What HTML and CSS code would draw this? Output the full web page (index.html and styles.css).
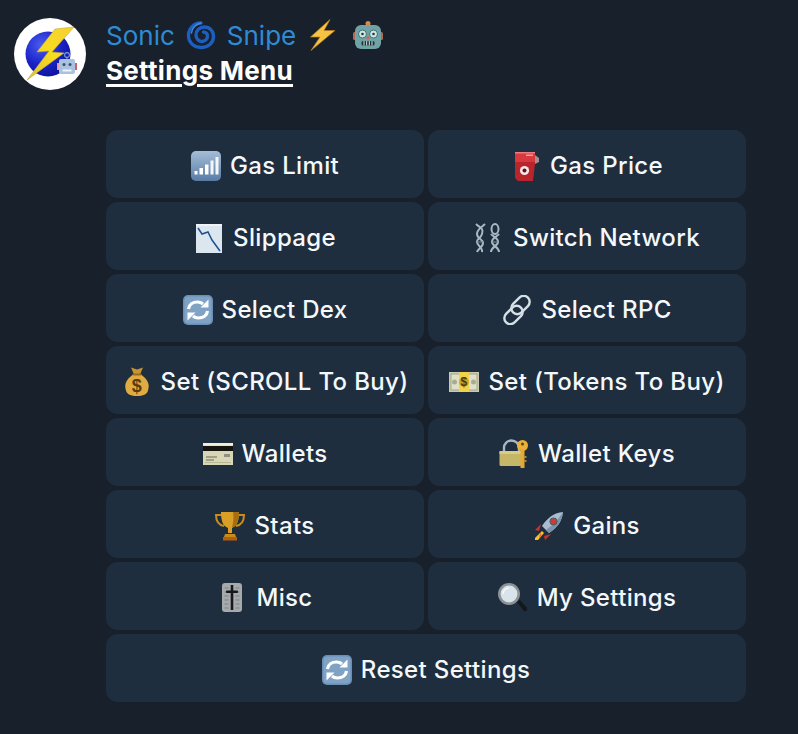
FILE: index.html
```html
<!DOCTYPE html>
<html lang="en">
<head>
<meta charset="utf-8">
<title>Settings Menu</title>
<link rel="stylesheet" href="styles.css">
</head>
<body>
<main class="chat">
  <header class="message">
    <svg class="avatar" viewBox="0 0 72 72">
      <defs>
        <radialGradient id="sphere" cx="0.35" cy="0.3" r="0.8"><stop offset="0" stop-color="#4a5cf0"/><stop offset="0.55" stop-color="#1a22c8"/><stop offset="1" stop-color="#0c1190"/></radialGradient>
        <linearGradient id="bolt" x1="0" y1="1" x2="1" y2="0"><stop offset="0" stop-color="#d8c040"/><stop offset="0.5" stop-color="#f8dc20"/><stop offset="1" stop-color="#f5d030"/></linearGradient>
      </defs>
      <circle cx="36" cy="36" r="36" fill="#fff"/>
      <circle cx="34" cy="36" r="22.500" fill="url(#sphere)"/>
      <path d="M60 9 L41 11 L23 34 L35 33 L13 62 L50 35 L38 34 Z" fill="url(#bolt)" stroke="#c4ab30" stroke-width="0.600"/>
      <g>
        <circle cx="53" cy="37" r="2.400" fill="none" stroke="#7f9fd0" stroke-width="1.100"/>
        <path d="M53 39.500v2" stroke="#7f9fd0" stroke-width="1.100"/>
        <rect x="45" y="41" width="16" height="15" rx="2" fill="#a9c2e0"/>
        <rect x="43" y="45" width="2" height="7" fill="#e0a0a8"/><rect x="61" y="45" width="2" height="7" fill="#c9606a"/>
        <circle cx="50" cy="46.500" r="1.500" fill="#3c4f70"/><circle cx="56" cy="46.500" r="1.500" fill="#3c4f70"/>
        <rect x="48.500" y="51.500" width="9" height="2" fill="#eef3f8"/>
      </g>
    </svg>
    <div class="message-text">
      <p class="bot-name">
        <span>Sonic</span>
        <svg class="title-icon" viewBox="0 0 30 30"><path d="M15 3C8 3 2.500 8.500 2.500 15.500 2.500 22.500 8 27.500 15 27.500 22 27.500 27.500 23 27.500 16.500 27.500 11 23.500 7 18.500 7 13.500 7 10 10.500 10 15 10 19 13 21.500 16 21.500 19 21.500 21.500 19 21.500 16 21.500 13.500 19.500 12 17.500 12" fill="none" stroke="#1d5fc0" stroke-width="3.400" stroke-linecap="round"/><path d="M15 3C10 4 6 8 5.500 13" fill="none" stroke="#3f8ae0" stroke-width="1.500" stroke-linecap="round"/></svg>
        <span>Snipe</span>
        <svg class="title-icon title-zap" viewBox="0 0 30 32"><path d="M21 0.500 L1.500 18 L11 18 L2 31.500 L26 11.500 L15 11.500 Z" fill="#f6c343" stroke="#b97f1c" stroke-width="0.700"/></svg>
        <svg class="title-icon" viewBox="0 0 30 30"><circle cx="15" cy="3.500" r="2.500" fill="#d98a4a"/><rect x="0" y="12" width="4" height="8" rx="1.500" fill="#b06a52"/><rect x="26" y="12" width="4" height="8" rx="1.500" fill="#b06a52"/><rect x="2" y="5" width="26" height="24" rx="6" fill="#6fa3a5"/><circle cx="9.500" cy="14" r="4" fill="#cfe6e6" stroke="#3f6f73" stroke-width="1"/><circle cx="20.500" cy="14" r="4" fill="#cfe6e6" stroke="#3f6f73" stroke-width="1"/><circle cx="9.500" cy="14" r="1.300" fill="#22383c"/><circle cx="20.500" cy="14" r="1.300" fill="#22383c"/><path d="M15 15.500l-2 3.500h4z" fill="#c9655c"/><rect x="8.500" y="21" width="13" height="4.500" rx="1.500" fill="#1f3236"/><path d="M11 21v4.500M13.700 21v4.500M16.300 21v4.500M19 21v4.500" stroke="#cfe6e6" stroke-width="1"/></svg>
      </p>
      <h1 class="menu-title">Settings Menu</h1>
    </div>
  </header>

  <nav class="keyboard">
    <button class="key">
      <svg class="icon" viewBox="0 0 30 30"><defs><linearGradient id="tile" x1="0" y1="0" x2="0" y2="1"><stop offset="0" stop-color="#a5bdd6"/><stop offset="1" stop-color="#587ca6"/></linearGradient></defs><rect width="30" height="30" rx="5" fill="url(#tile)"/><rect x="3.500" y="20" width="3" height="3.500" fill="#fff"/><rect x="8.500" y="17" width="3.500" height="6.500" fill="#fff"/><rect x="14" y="13.500" width="3.500" height="10" fill="#fff"/><rect x="19.500" y="9.500" width="3" height="14" fill="#f4f7fa"/><rect x="24.500" y="6" width="3" height="17.500" fill="#f4f7fa"/></svg>
      <span>Gas Limit</span>
    </button>
    <button class="key">
      <svg class="icon" viewBox="0 0 30 30"><path d="M4 1h20v5l1 2-1 2v3l-2 17H7L4 27z" fill="#b8252b"/><path d="M4 1h20v10H4z" fill="#d8393f"/><path d="M4 1h20v1.500H4z" fill="#ee7b7e"/><path d="M24 4l4 3v4l-4 2z" fill="#a48e8e"/><rect x="15" y="3.500" width="7" height="1.500" fill="#f0a0a0"/><circle cx="13.500" cy="19.500" r="4.600" fill="#f6e6e6"/><circle cx="13.500" cy="19.500" r="2" fill="#5a1518"/></svg>
      <span>Gas Price</span>
    </button>
    <button class="key">
      <svg class="icon" viewBox="0 0 30 30"><rect x="2" y="1" width="26" height="29" fill="#dbe6ee"/><path d="M2 1h26v2H2z" fill="#eef3f7"/><path d="M4 5L8 11 14 9 18 17 26 28" fill="none" stroke="#1f4f95" stroke-width="1.500"/></svg>
      <span>Slippage</span>
    </button>
    <button class="key">
      <svg class="icon" viewBox="0 0 30 30"><g fill="none" stroke="#a9b8c2" stroke-width="2"><path d="M2 1c4 4 8 4 6 10S3 15 3 19s6 5 5 10M11 1C7 5 3 6 3 11s6 5 6 9-5 6-6 9"/><ellipse cx="21" cy="6" rx="3.500" ry="5"/><path d="M25 11c-2 3-7 3-7 8 0 4 7 5 7 10M17 11c2 3 7 3 7 8 0 4-7 5-7 10"/></g><g fill="none" stroke="#7f8e98" stroke-width="1"><path d="M3 19h6M18 19h6"/></g></svg>
      <span>Switch Network</span>
    </button>
    <button class="key">
      <svg class="icon" viewBox="0 0 30 30"><use href="#reset"/></svg>
      <span>Select Dex</span>
    </button>
    <button class="key">
      <svg class="icon" viewBox="0 0 30 30"><g fill="none" stroke="#d5dfe6" stroke-width="2.400"><rect x="8" y="4" width="21" height="12" rx="6" transform="rotate(-45 18.500 10)"/><rect x="1" y="14" width="21" height="12" rx="6" transform="rotate(-45 11.500 20)"/></g></svg>
      <span>Select RPC</span>
    </button>
    <button class="key">
      <svg class="icon" viewBox="0 0 30 30"><path d="M9 0.500l6 2 6-2-3 7h-6z" fill="#c9942f"/><path d="M11 7.500h8c7 5 9 10 7 16-1 4-5 5.500-11 5.500S5 27.500 4 23.500c-2-6 0-11 7-16z" fill="#e0ac42"/><rect x="10.500" y="6.500" width="9" height="2" rx="1" fill="#9a6a1c"/><text x="15" y="25" text-anchor="middle" class="glyph-money">$</text></svg>
      <span>Set (SCROLL To Buy)</span>
    </button>
    <button class="key">
      <svg class="icon" viewBox="0 0 30 30"><rect y="5" width="30" height="20" fill="#c9cbb0"/><rect x="2" y="7" width="26" height="16" fill="#e0e0c8" stroke="#9a9c82" stroke-width="0.800"/><rect x="10" y="5" width="10" height="20" fill="#f2d24a"/><circle cx="15" cy="15" r="5" fill="#d0a52a"/><text x="15" y="19" text-anchor="middle" class="glyph-bill">$</text><circle cx="5.500" cy="15" r="2.500" fill="#a9ab90"/><circle cx="24.500" cy="15" r="2.500" fill="#a9ab90"/></svg>
      <span>Set (Tokens To Buy)</span>
    </button>
    <button class="key">
      <svg class="icon" viewBox="0 0 30 30"><rect y="4" width="30" height="22" fill="#d8d6b4"/><rect y="4" width="30" height="2.500" fill="#f2efd8"/><rect y="7" width="30" height="5" fill="#15140f"/><path d="M3 18h11M3 21h8" stroke="#8d8d78" stroke-width="1.300"/><rect x="21" y="15" width="6" height="3" fill="#8f8f86"/><rect x="2" y="23" width="26" height="1" fill="#b9b795"/></svg>
      <span>Wallets</span>
    </button>
    <button class="key">
      <svg class="icon" viewBox="0 0 30 30"><path d="M5 13V9a7.500 7.500 0 0 1 15 0v4" fill="none" stroke="#a8b6c4" stroke-width="2.400"/><rect x="0.500" y="12" width="22" height="15" rx="1.500" fill="#c6b668"/><rect x="0.500" y="12" width="22" height="3" fill="#d9cc86"/><circle cx="23.500" cy="6.500" r="5.500" fill="#eab03a"/><circle cx="23.500" cy="5" r="1.500" fill="#5d4314"/><rect x="21.500" y="10" width="4" height="19" fill="#e5a830"/><path d="M25.500 18h2M25.500 22h2" stroke="#e5a830" stroke-width="1.500"/></svg>
      <span>Wallet Keys</span>
    </button>
    <button class="key">
      <svg class="icon" viewBox="0 0 30 30"><path d="M7 4H1c0 6 3 10 8 11M23 4h6c0 6-3 10-8 11" fill="none" stroke="#c78d18" stroke-width="2"/><path d="M6 1h18c0 9-2 14-7 16v5h-4v-5C8 15 6 10 6 1z" fill="#d9a025"/><path d="M18 1h6c0 9-2 14-7 16 1-5 2-10 1-16z" fill="#a86f10"/><path d="M10 23h10l1 3H9z" fill="#c78d18"/><rect x="8" y="26" width="14" height="3.500" fill="#b35f12"/></svg>
      <span>Stats</span>
    </button>
    <button class="key">
      <svg class="icon" viewBox="0 0 30 30"><path d="M7 13l-6 6 4 1zM17 23l-6 6-1-4z" fill="#c9342a"/><path d="M29 1C20 2 14 6 8 15l7 7c9-6 13-12 14-21z" fill="#a9bdd0"/><path d="M29 1c-1 9-5 15-14 21l-3-3C19 14 25 8 29 1z" fill="#7c93ab"/><circle cx="19.500" cy="10.500" r="3.600" fill="#cf3b2e" stroke="#4d5a68" stroke-width="1"/><path d="M8 20l2 2-6 7-3 0 0-2z" fill="#f2c230"/><path d="M6 22l2 2-3 3z" fill="#e9702b"/></svg>
      <span>Gains</span>
    </button>
    <button class="key">
      <svg class="icon" viewBox="0 0 30 30"><rect x="5" width="20" height="29" rx="3" fill="#a6aaad"/><path d="M7.500 5h4M7.500 9h4M7.500 13h4M7.500 17h4M7.500 21h4M7.500 25h4M18.500 5h4M18.500 9h4M18.500 13h4M18.500 17h4M18.500 21h4M18.500 25h4" stroke="#7d8184" stroke-width="1"/><rect x="13.700" y="2" width="2.600" height="25" fill="#17181a"/><rect x="9" y="7.500" width="12" height="2.600" rx="0.800" fill="#17181a"/></svg>
      <span>Misc</span>
    </button>
    <button class="key">
      <svg class="icon" viewBox="0 0 30 30"><path d="M19 19l3-2 7 8c1 2-1 4-3 3z" fill="#14171b"/><circle cx="11" cy="11" r="11" fill="#8d9296"/><circle cx="11" cy="11" r="8.400" fill="#d9e4ea"/><path d="M5 11a6 6 0 0 1 6-6" fill="none" stroke="#f6fafc" stroke-width="1.500"/></svg>
      <span>My Settings</span>
    </button>
    <button class="key key-wide">
      <svg class="icon" viewBox="0 0 30 30">
        <symbol id="reset" viewBox="0 0 30 30">
          <rect width="30" height="30" rx="5" fill="#6a8fb6"/>
          <rect x="1.500" y="1.500" width="27" height="27" rx="4" fill="#7fa2c5"/>
          <path d="M5.500 14C6 9.500 10 7 14.500 7c2 0 4 .6 5.500 2" fill="none" stroke="#fff" stroke-width="3.200"/>
          <path d="M24.500 16c-.5 4.500-4.500 7-9 7-2 0-4-.6-5.500-2" fill="none" stroke="#fff" stroke-width="3.200"/>
          <path d="M17.500 12.500h8v-8zM12.500 17.500h-8v8z" fill="#fff"/>
        </symbol>
        <use href="#reset"/>
      </svg>
      <span>Reset Settings</span>
    </button>
  </nav>
</main>
</body>
</html>
```

FILE: styles.css
```css
* {
  box-sizing: border-box;
}

html,
body {
  margin: 0;
  height: 100%;
}

body {
  background: #18202b;
  color: #f4f8fb;
  font-family: Inter, "Liberation Sans", sans-serif;
  overflow: hidden;
}

.chat {
  padding: 18px 52px 0 14px;
}

.message {
  display: flex;
  gap: 20px;
  align-items: flex-start;
}

.avatar {
  width: 72px;
  height: 72px;
  flex: none;
}

.bot-name {
  margin: 0;
  height: 34px;
  display: flex;
  align-items: center;
  gap: 11px;
  color: #2f8bd4;
  font-size: 26px;
  font-weight: 400;
}

.title-icon {
  width: 30px;
  height: 30px;
  flex: none;
}

.title-zap {
  width: 30px;
  height: 32px;
  margin: 0 3px 0 2px;
}

.menu-title {
  margin: 2px 0 0;
  font-size: 26px;
  line-height: 34px;
  font-weight: 700;
  letter-spacing: 0.3px;
  color: #fff;
  text-decoration: underline;
  text-decoration-thickness: 2.500px;
  text-underline-offset: 4px;
}

.keyboard {
  display: grid;
  grid-template-columns: 318px 318px;
  grid-auto-rows: 68px;
  gap: 4px;
  margin: 40px 0 0 92px;
}

.key {
  display: flex;
  align-items: center;
  justify-content: center;
  gap: 9px;
  padding: 3px 0 0;
  border: 0;
  border-radius: 12px;
  background: #1f2e3f;
  color: #f4f8fb;
  font: 500 24px Inter, "Liberation Sans", sans-serif;
  letter-spacing: 0.35px;
}

.key-wide {
  grid-column: 1 / -1;
}

.icon {
  width: 30px;
  height: 30px;
  flex: none;
}

.glyph-money {
  font: 700 18px "Liberation Sans", sans-serif;
  fill: #5c3a0c;
}

.glyph-bill {
  font: 700 12px "Liberation Sans", sans-serif;
  fill: #4d3a08;
}
```
